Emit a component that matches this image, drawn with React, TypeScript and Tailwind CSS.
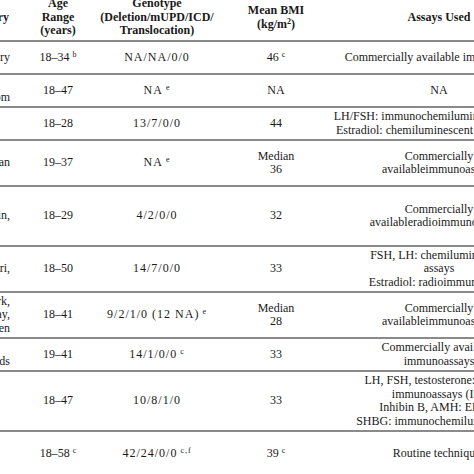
type Row = {
  h: string;
  place: string[];
  age: string;
  ageSup?: string;
  geno: string;
  genoSup?: string;
  bmi: string[];
  bmiSup?: string;
  assays: string[];
};

const rows: Row[] = [
  { h: 'h-[33px]', place: ['Hungary'], age: '18–34', ageSup: 'b', geno: 'NA/NA/0/0', bmi: ['46'], bmiSup: 'c', assays: ['Commercially available immunoassays'] },
  { h: 'h-[33px]', place: ['\u00a0', 'Kingdom'], age: '18–47', geno: 'NA', genoSup: 'e', bmi: ['NA'], assays: ['NA'] },
  { h: 'h-[33px]', place: [], age: '18–28', geno: '13/7/0/0', bmi: ['44'], assays: ['LH/FSH: immunochemiluminometric assay', 'Estradiol: chemiluminescent immunoassay'] },
  { h: 'h-[46px]', place: ['Japan'], age: '19–37', geno: 'NA', genoSup: 'e', bmi: ['Median', '36'], assays: ['Commercially', 'availableimmunoassays'] },
  { h: 'h-[60px]', place: ['Spain,'], age: '18–29', geno: '4/2/0/0', bmi: ['32'], assays: ['Commercially', 'availableradioimmunoassays'] },
  { h: 'h-[46px]', place: ['Missouri,'], age: '18–50', geno: '14/7/0/0', bmi: ['33'], assays: ['FSH, LH: chemiluminescent', 'assays', 'Estradiol: radioimmunoassay'] },
  { h: 'h-[46px]', place: ['Denmark,', 'Norway,', 'Sweden'], age: '18–41', geno: '9/2/1/0 (12 NA)', genoSup: 'e', bmi: ['Median', '28'], assays: ['Commercially', 'availableimmunoassays'] },
  { h: 'h-[33px]', place: ['\u00a0', 'Netherlands'], age: '19–41', geno: '14/1/0/0', genoSup: 'c', bmi: ['33'], assays: ['Commercially available', 'immunoassays'] },
  { h: 'h-[60px]', place: [], age: '18–47', geno: '10/8/1/0', bmi: ['33'], assays: ['LH, FSH, testosterone: ECLIA', 'immunoassays (IA)', 'Inhibin B, AMH: ELISA', 'SHBG: immunochemiluminescent'] },
  { h: 'h-[46px]', place: [], age: '18–58', ageSup: 'c', geno: '42/24/0/0', genoSup: 'c,f', bmi: ['39'], bmiSup: 'c', assays: ['Routine techniques'] },
];

function Sup({ t }: { t?: string }) {
  if (!t) return null;
  return <sup className="ml-[3px] text-[8px]">{t}</sup>;
}

function Lines({ lines, sup }: { lines: string[]; sup?: string }) {
  return (
    <div className="flex flex-col items-center justify-center text-center">
      {lines.map((l, i) => (
        <div key={i} className="whitespace-nowrap">
          {l}
          {i === lines.length - 1 && <Sup t={sup} />}
        </div>
      ))}
    </div>
  );
}

export default function App() {
  return (
    <div className="w-full h-screen overflow-hidden bg-white">
      <div className="w-[542px] -mt-[5px] font-['Liberation_Serif',serif] text-[12px] leading-[13.5px] text-[#1a1a1a]">
        {/* header */}
        <div className="grid grid-cols-[18px_80px_118px_120px_206px] h-[47px] border-b-2 border-[#8a8a8a] font-bold">
          <div className="flex items-center justify-end overflow-hidden pr-[9px]">
            <span className="whitespace-nowrap">Country</span>
          </div>
          <div className="flex items-center justify-center">
            <Lines lines={['Age', 'Range', '(years)']} />
          </div>
          <div className="flex items-center justify-center">
            <Lines lines={['Genotype', '(Deletion/mUPD/ICD/', 'Translocation)']} />
          </div>
          <div className="flex items-center justify-center">
            <div className="flex flex-col items-center">
              <div>Mean BMI</div>
              <div>
                (kg/m<sup className="text-[8px]">2</sup>)
              </div>
            </div>
          </div>
          <div className="flex items-center justify-center">
            <Lines lines={['Assays Used']} />
          </div>
        </div>

        {rows.map((r, i) => (
          <div key={i} className={`grid grid-cols-[18px_80px_118px_120px_206px] border-b-2 border-[#8a8a8a] ${r.h}`}>
            <div className="flex flex-col justify-center overflow-hidden pr-[8px]">
              {r.place.map((p, j) => (
                <div key={j} className="flex justify-end whitespace-nowrap">
                  {p}
                </div>
              ))}
            </div>
            <div className="flex items-center justify-center">
              <Lines lines={[r.age]} sup={r.ageSup} />
            </div>
            <div className="flex items-center justify-center tracking-[1px]">
              <Lines lines={[r.geno]} sup={r.genoSup} />
            </div>
            <div className="flex items-center justify-center">
              <Lines lines={r.bmi} sup={r.bmiSup} />
            </div>
            <div className="flex items-center justify-center">
              <Lines lines={r.assays} />
            </div>
          </div>
        ))}
      </div>
    </div>
  );
}
